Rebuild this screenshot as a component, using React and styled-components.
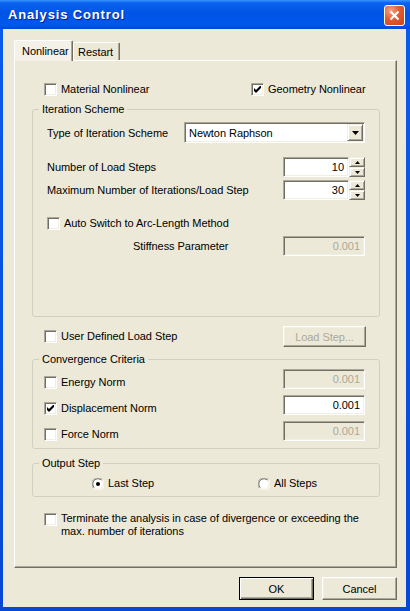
import React from 'react'
import styled, { createGlobalStyle } from 'styled-components'

const GlobalStyle = createGlobalStyle`
  html, body {
    margin: 0;
    padding: 0;
    background: #fff;
  }
  body {
    font-family: "Liberation Sans", Arial, sans-serif;
    font-size: 11px;
    letter-spacing: -0.05px;
    color: #000;
  }
  * {
    box-sizing: border-box;
  }
`

const Window = styled.div`
  width: 410px;
  height: 611px;
  display: flex;
  flex-direction: column;
  background: linear-gradient(to bottom, #0A5CEB, #0748D4);
`

const TitleBar = styled.div`
  height: 29px;
  flex-shrink: 0;
  display: flex;
  align-items: center;
  justify-content: space-between;
  padding: 2px 5px 0 8px;
  background: linear-gradient(
    to bottom,
    #3C95FF 0%,
    #0A62EE 10%,
    #0054E6 45%,
    #0058EE 85%,
    #0048D8 100%
  );
`

const Title = styled.span`
  font-family: "Liberation Sans", Arial, sans-serif;
  font-weight: bold;
  font-size: 13px;
  color: #fff;
  letter-spacing: 0.85px;
  text-shadow: 1px 1px 0 #0A1E8C;
  margin-top: -2px;
`

const CloseButton = styled.div`
  width: 21px;
  height: 21px;
  border: 1px solid #fff;
  border-radius: 3px;
  background: radial-gradient(circle at 30% 25%, #F2A48A 0%, #E25A30 45%, #C8431A 100%);
  display: flex;
  align-items: center;
  justify-content: center;
`

const Client = styled.div`
  flex: 1;
  margin: 0 4px 4px 3px;
  padding: 11px 9px 7px 11px;
  background: #ECE9D8;
  display: flex;
  flex-direction: column;
`

const TabStrip = styled.div`
  height: 20px;
  display: flex;
  align-items: flex-end;
`

const Tab = styled.div`
  position: relative;
  z-index: ${p => (p.$active ? 1 : 0)};
  width: ${p => p.$w}px;
  height: ${p => (p.$active ? 21 : 18)}px;
  margin-bottom: ${p => (p.$active ? -1 : 0)}px;
  padding-left: ${p => (p.$active ? 7 : 4)}px;
  display: flex;
  align-items: center;
  background: ${p => (p.$active ? '#F3F1E8' : '#ECE9D8')};
  border: 1px solid;
  border-bottom: none;
  border-color: #fff #716F64 transparent #fff;
  border-radius: 2px 2px 0 0;
  box-shadow: inset -1px 0 0 #ACA899;
`

const Panel = styled.div`
  height: 508px;
  border: 1px solid;
  border-color: #fff #716F64 #716F64 #fff;
  box-shadow: inset -1px -1px 0 #ACA899;
  padding: 21px 16px 0 17px;
  display: flex;
  flex-direction: column;
`

const TopRow = styled.div`
  display: grid;
  grid-template-columns: 207px auto;
  padding-left: 12px;
  margin-top: 1px;
  height: 13px;
`

const CheckLabel = styled.label`
  display: flex;
  align-items: ${p => (p.$top ? 'flex-start' : 'center')};
  gap: 4px;
  line-height: 13px;
  white-space: nowrap;
`

const Box = styled.span`
  width: 13px;
  height: 13px;
  flex-shrink: 0;
  background: #fff;
  border: 1px solid;
  border-color: #ACA899 #fff #fff #ACA899;
  box-shadow: inset 1px 1px 0 #716F64, inset -1px -1px 0 #F1EFE2;
  display: flex;
  align-items: center;
  justify-content: center;
`

const Group = styled.div`
  margin-top: ${p => p.$mt}px;
  border: 1px solid #D0D0BF;
  border-radius: 3px;
  padding: 0 14px ${p => p.$pb}px ${p => p.$pl}px;
  display: flex;
  flex-direction: column;
`

const GroupTitle = styled.span`
  width: max-content;
  margin: -7px 0 0 ${p => 6 - p.$pl}px;
  padding: 0 3px;
  line-height: 13px;
  background: #ECE9D8;
`

const FieldRow = styled.div`
  margin-top: ${p => p.$mt}px;
  height: ${p => p.$h || 20}px;
  display: flex;
  align-items: ${p => (p.$bottom ? 'flex-end' : 'center')};
  justify-content: space-between;
`

const TextBox = styled.div`
  width: ${p => p.$w || 82}px;
  height: 20px;
  flex-shrink: 0;
  border: 1px solid;
  border-color: #ACA899 #fff #fff #ACA899;
  box-shadow: inset 1px 1px 0 #716F64, inset -1px -1px 0 #F1EFE2;
  background: ${p => (p.$disabled ? '#ECE9D8' : '#fff')};
  color: ${p => (p.$disabled ? '#ACA899' : '#000')};
  display: flex;
  align-items: center;
  justify-content: flex-end;
  padding: 0 4px;
`

const Spinner = styled.div`
  display: flex;
  height: 20px;
`

const SpinButtons = styled.div`
  width: 16px;
  display: flex;
  flex-direction: column;
`

const Raised = styled.div`
  flex: 1;
  background: #ECE9D8;
  border: 1px solid;
  border-color: #F1EFE2 #716F64 #716F64 #F1EFE2;
  box-shadow: inset 1px 1px 0 #fff, inset -1px -1px 0 #ACA899;
  display: flex;
  align-items: center;
  justify-content: center;
`

const Combo = styled.div`
  width: 181px;
  height: 21px;
  border: 1px solid;
  border-color: #ACA899 #fff #fff #ACA899;
  box-shadow: inset 1px 1px 0 #716F64, inset -1px -1px 0 #F1EFE2;
  background: #fff;
  display: flex;
  align-items: center;
  padding: 2px 1px 2px 2px;
`

const ComboText = styled.span`
  flex: 1;
  padding-left: 2px;
`

const ComboArrow = styled(Raised)`
  flex: none;
  width: 16px;
  height: 17px;
`

const StiffLabel = styled.span`
  margin-left: 86px;
`

const UserRow = styled.div`
  margin-top: 9px;
  height: 21px;
  display: flex;
  align-items: center;
  justify-content: space-between;
  padding: 0 14px 0 12px;
`

const Button = styled.div`
  width: ${p => p.$w}px;
  height: ${p => p.$h}px;
  background: #ECE9D8;
  color: ${p => (p.$disabled ? '#ACA899' : '#000')};
  border: 1px solid;
  border-color: ${p => (p.$default ? '#000' : '#fff #716F64 #716F64 #fff')};
  box-shadow: ${p =>
    p.$default
      ? 'inset 1px 1px 0 #fff, inset -1px -1px 0 #716F64, inset -2px -2px 0 #ACA899'
      : 'inset -1px -1px 0 #ACA899, inset 1px 1px 0 #F1EFE2'};
  display: flex;
  align-items: center;
  justify-content: center;
`

const NormRows = styled.div`
  margin-top: 3px;
  display: flex;
  flex-direction: column;
  gap: 6px;
`

const RadioRow = styled.div`
  margin-top: 7px;
  height: 13px;
  display: grid;
  grid-template-columns: 166px auto;
  padding-left: 59px;
`

const RadioLabel = styled.label`
  display: flex;
  align-items: center;
  gap: 4px;
  line-height: 13px;
`

const TerminateRow = styled.div`
  margin-top: 16px;
  padding-left: 12px;
`

const TerminateText = styled.span`
  margin-top: -1px;
  white-space: normal;
`

const Footer = styled.div`
  margin-top: 9px;
  display: flex;
  justify-content: flex-end;
  gap: 8px;
`

function CheckBox({ checked, children, top }) {
  return (
    <CheckLabel $top={top}>
      <Box>
        {checked && (
          <svg width="7" height="7" viewBox="0 0 7 7">
            <polygon points="0,2 2,4 7,-1 7,2 2,7 0,5" fill="#000" />
          </svg>
        )}
      </Box>
      {children}
    </CheckLabel>
  )
}

function Radio({ checked, children }) {
  return (
    <RadioLabel>
      <svg width="12" height="12" viewBox="0 0 12 12">
        <circle cx="6" cy="6" r="5.5" fill="#fff" />
        <path d="M1.5 10.5 A6 6 0 0 1 10.5 1.5" stroke="#ACA899" strokeWidth="1" fill="none" />
        <path d="M2.3 9.7 A5 5 0 0 1 9.7 2.3" stroke="#716F64" strokeWidth="1" fill="none" />
        <path d="M10.5 1.5 A6 6 0 0 1 1.5 10.5" stroke="#fff" strokeWidth="1" fill="none" />
        <path d="M9.7 2.3 A5 5 0 0 1 2.3 9.7" stroke="#F1EFE2" strokeWidth="1" fill="none" />
        {checked && <circle cx="6" cy="6" r="2" fill="#000" />}
      </svg>
      {children}
    </RadioLabel>
  )
}

function SpinBox({ value }) {
  return (
    <Spinner>
      <TextBox $w={66}>{value}</TextBox>
      <SpinButtons>
        <Raised>
          <svg width="5" height="3" viewBox="0 0 5 3">
            <polygon points="2.5,0 5,3 0,3" fill="#000" />
          </svg>
        </Raised>
        <Raised>
          <svg width="5" height="3" viewBox="0 0 5 3">
            <polygon points="0,0 5,0 2.5,3" fill="#000" />
          </svg>
        </Raised>
      </SpinButtons>
    </Spinner>
  )
}

export default function App() {
  return (
    <>
      <GlobalStyle />
      <Window>
        <TitleBar>
          <Title>Analysis Control</Title>
          <CloseButton>
            <svg width="11" height="11" viewBox="0 0 11 11">
              <path d="M1.5 1.5 L9.5 9.5 M9.5 1.5 L1.5 9.5" stroke="#fff" strokeWidth="2.2" />
            </svg>
          </CloseButton>
        </TitleBar>
        <Client>
          <TabStrip>
            <Tab $active $w={59}>Nonlinear</Tab>
            <Tab $w={47}>Restart</Tab>
          </TabStrip>
          <Panel>
            <TopRow>
              <CheckBox>Material Nonlinear</CheckBox>
              <CheckBox checked>Geometry Nonlinear</CheckBox>
            </TopRow>

            <Group $mt={13} $pl={14} $pb={60}>
              <GroupTitle $pl={14}>Iteration Scheme</GroupTitle>
              <FieldRow $mt={6} $h={21}>
                <span>Type of Iteration Scheme</span>
                <Combo>
                  <ComboText>Newton Raphson</ComboText>
                  <ComboArrow>
                    <svg width="7" height="4" viewBox="0 0 7 4">
                      <polygon points="0,0 7,0 3.5,4" fill="#000" />
                    </svg>
                  </ComboArrow>
                </Combo>
              </FieldRow>
              <FieldRow $mt={14}>
                <span>Number of Load Steps</span>
                <SpinBox value="10" />
              </FieldRow>
              <FieldRow $mt={3}>
                <span>Maximum Number of Iterations/Load Step</span>
                <SpinBox value="30" />
              </FieldRow>
              <FieldRow $mt={17} $h={13}>
                <CheckBox>Auto Switch to Arc-Length Method</CheckBox>
              </FieldRow>
              <FieldRow $mt={6}>
                <StiffLabel>Stiffness Parameter</StiffLabel>
                <TextBox $disabled>0.001</TextBox>
              </FieldRow>
            </Group>

            <UserRow>
              <CheckBox>User Defined Load Step</CheckBox>
              <Button $w={83} $h={21} $disabled>Load Step...</Button>
            </UserRow>

            <Group $mt={12} $pl={11} $pb={7}>
              <GroupTitle $pl={11}>Convergence Criteria</GroupTitle>
              <NormRows>
                <FieldRow $bottom>
                  <CheckBox>Energy Norm</CheckBox>
                  <TextBox $disabled>0.001</TextBox>
                </FieldRow>
                <FieldRow $bottom>
                  <CheckBox checked>Displacement Norm</CheckBox>
                  <TextBox>0.001</TextBox>
                </FieldRow>
                <FieldRow $bottom>
                  <CheckBox>Force Norm</CheckBox>
                  <TextBox $disabled>0.001</TextBox>
                </FieldRow>
              </NormRows>
            </Group>

            <Group $mt={14} $pl={0} $pb={6}>
              <GroupTitle $pl={0}>Output Step</GroupTitle>
              <RadioRow>
                <Radio checked>Last Step</Radio>
                <Radio>All Steps</Radio>
              </RadioRow>
            </Group>

            <TerminateRow>
              <CheckBox top>
                <TerminateText>
                  Terminate the analysis in case of divergence or exceeding the
                  <br />
                  max. number of iterations
                </TerminateText>
              </CheckBox>
            </TerminateRow>
          </Panel>
          <Footer>
            <Button $w={75} $h={23} $default>OK</Button>
            <Button $w={75} $h={23}>Cancel</Button>
          </Footer>
        </Client>
      </Window>
    </>
  )
}
